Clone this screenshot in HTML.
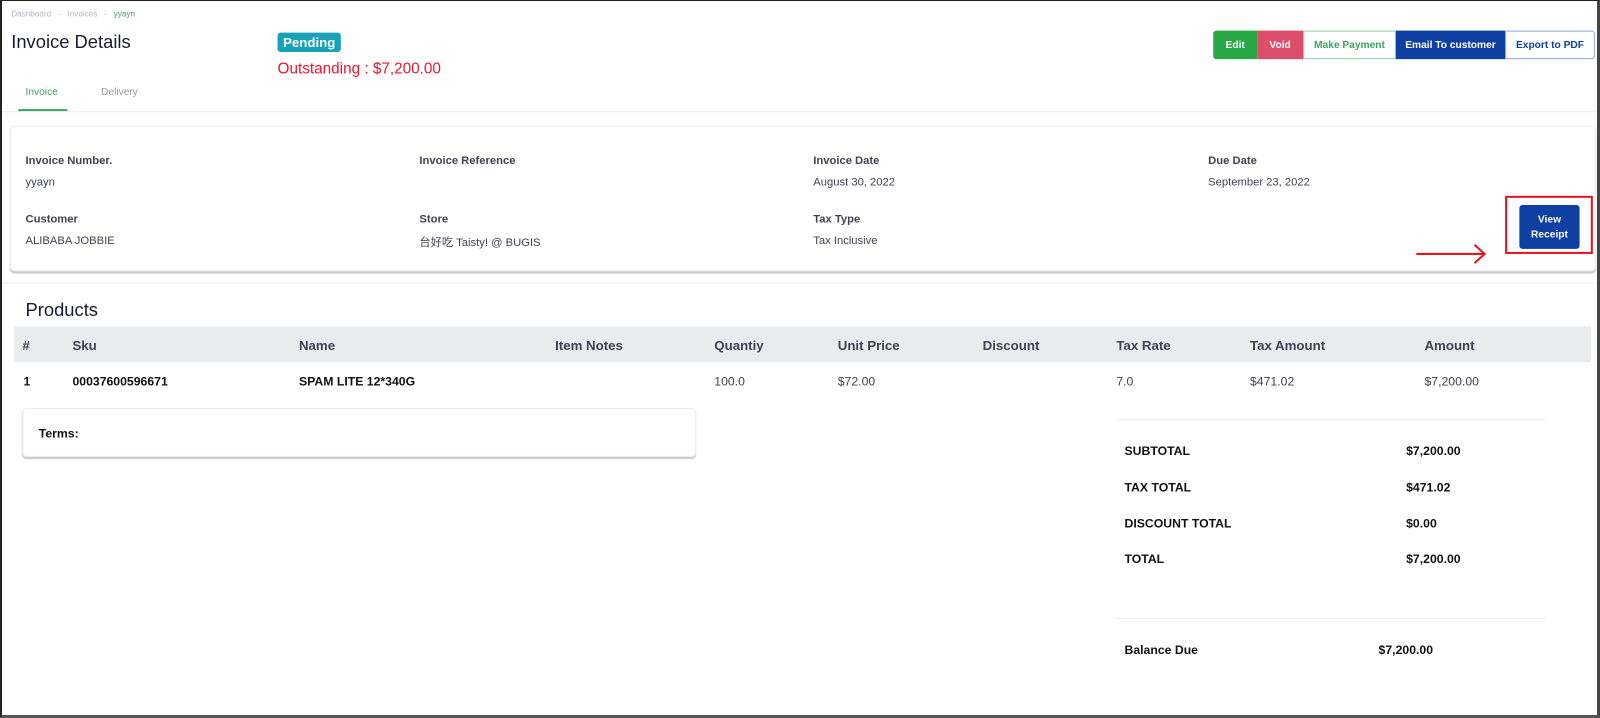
<!DOCTYPE html>
<html><head><meta charset="utf-8"><style>
*{margin:0;padding:0;box-sizing:border-box}
body{width:1600px;height:718px;background:#fff;font-family:"Liberation Sans","Noto Sans CJK SC",sans-serif;position:relative;overflow:hidden;color:#3f4254}
.wrap{position:absolute;left:0;top:0;width:1568px;height:704px;transform:scale(1.0204,1.0199);transform-origin:0 0}
.frame{position:absolute;left:0;top:0;width:1600px;height:718px;border-left:2px solid #222;border-top:1px solid #222;border-right:3px solid #444;border-bottom:3px solid #555}
.a{position:absolute;white-space:nowrap}
.lbl{font-size:11px;font-weight:bold;color:#3f4254}
.val{font-size:11px;color:#3f4254}
.th{font-size:13px;font-weight:bold;color:#3f4254}
.td{font-size:12px;color:#3f4254}
.btn{position:absolute;top:30px;height:28px;font-size:10px;font-weight:bold;display:flex;align-items:center;justify-content:center}
.tot{font-size:12px;font-weight:bold;color:#111}
</style></head><body>
<div class="wrap">
<div class="a" style="left:11px;top:9px;font-size:8px;color:#b5b5c3">Dashboard &nbsp;&nbsp;-&nbsp;&nbsp; Invoices &nbsp;&nbsp;-&nbsp;&nbsp; <span style="color:#3ba55c">yyayn</span></div>
<div class="a" style="left:11px;top:31px;font-size:18px;color:#181c32">Invoice Details</div>
<div class="a" style="left:272px;top:32px;width:62px;height:19px;background:#17a2b8;border-radius:3px;color:#fff;font-size:13px;font-weight:bold;text-align:center;line-height:19px">Pending</div>
<div class="a" style="left:272px;top:59px;font-size:15px;color:#f5132a">Outstanding : $7,200.00</div>
<div class="a" style="left:25px;top:85px;font-size:10px;color:#3ba55c">Invoice</div>
<div class="a" style="left:18px;top:107px;width:48px;height:2px;background:#3ba55c"></div>
<div class="a" style="left:99px;top:85px;font-size:10px;color:#999">Delivery</div>
<div class="a" style="left:2px;top:109px;width:1565px;height:1px;background:#ebedf3"></div>

<div class="btn" style="left:1189px;width:43px;background:#28a745;color:#fff;border-radius:3px 0 0 3px">Edit</div>
<div class="btn" style="left:1232px;width:45px;background:#dc4e6a;color:#fff">Void</div>
<div class="btn" style="left:1277px;width:91px;background:#fff;color:#3ba55c;border:1px solid #8fd19e">Make Payment</div>
<div class="btn" style="left:1368px;width:107px;background:#0e3fa3;color:#fff">Email To customer</div>
<div class="btn" style="left:1475px;width:88px;background:#fff;color:#0e3fa3;border:1px solid #8fa6d6;border-radius:0 3px 3px 0">Export to PDF</div>

<div class="a" style="left:10px;top:123px;width:1554px;height:143px;border:1px solid #ebedf3;border-radius:4px;box-shadow:0 2px 1px #c8c8c8"></div>
<div class="a lbl" style="left:25px;top:152px">Invoice Number.</div>
<div class="a val" style="left:25px;top:173px">yyayn</div>
<div class="a lbl" style="left:411px;top:152px">Invoice Reference</div>
<div class="a lbl" style="left:797px;top:152px">Invoice Date</div>
<div class="a val" style="left:797px;top:173px">August 30, 2022</div>
<div class="a lbl" style="left:1184px;top:152px">Due Date</div>
<div class="a val" style="left:1184px;top:173px">September 23, 2022</div>
<div class="a lbl" style="left:25px;top:209px">Customer</div>
<div class="a val" style="left:25px;top:230px">ALIBABA JOBBIE</div>
<div class="a lbl" style="left:411px;top:209px">Store</div>
<div class="a val" style="left:411px;top:229px">台好吃 Taisty! @ BUGIS</div>
<div class="a lbl" style="left:797px;top:209px">Tax Type</div>
<div class="a val" style="left:797px;top:230px">Tax Inclusive</div>
<svg class="a" style="left:1387px;top:236px" width="70" height="26"><line x1="1" y1="13" x2="68" y2="13" stroke="#e8141c" stroke-width="2"/><polyline points="58,4 68,13 58,22" fill="none" stroke="#e8141c" stroke-width="2"/></svg>
<div class="a" style="left:1475px;top:192px;width:86px;height:57px;border:2px solid #e8141c"></div>
<div class="a" style="left:1489px;top:201px;width:59px;height:43px;background:#0e3fa3;border-radius:3px;color:#fff;font-size:10px;font-weight:bold;text-align:center;line-height:15px;padding-top:7px;white-space:normal">View<br>Receipt</div>

<div class="a" style="left:2px;top:277px;width:1565px;height:1px;background:#ebedf3"></div>
<div class="a" style="left:25px;top:294px;font-size:18px;color:#181c32">Products</div>
<div class="a" style="left:14px;top:320px;width:1545px;height:35px;background:#e9ecef"></div>
<div class="a th" style="left:22px;top:331px">#</div>
<div class="a th" style="left:71px;top:331px">Sku</div>
<div class="a th" style="left:293px;top:331px">Name</div>
<div class="a th" style="left:544px;top:331px">Item Notes</div>
<div class="a th" style="left:700px;top:331px">Quantiy</div>
<div class="a th" style="left:821px;top:331px">Unit Price</div>
<div class="a th" style="left:963px;top:331px">Discount</div>
<div class="a th" style="left:1094px;top:331px">Tax Rate</div>
<div class="a th" style="left:1225px;top:331px">Tax Amount</div>
<div class="a th" style="left:1396px;top:331px">Amount</div>
<div class="a td" style="left:23px;top:367px;font-weight:bold;color:#111">1</div>
<div class="a td" style="left:71px;top:367px;font-weight:bold;color:#111">00037600596671</div>
<div class="a td" style="left:293px;top:367px;font-weight:bold;color:#111">SPAM LITE 12*340G</div>
<div class="a td" style="left:700px;top:367px">100.0</div>
<div class="a td" style="left:821px;top:367px">$72.00</div>
<div class="a td" style="left:1094px;top:367px">7.0</div>
<div class="a td" style="left:1225px;top:367px">$471.02</div>
<div class="a td" style="left:1396px;top:367px">$7,200.00</div>

<div class="a" style="left:22px;top:400px;width:660px;height:48px;border:1px solid #ebedf3;border-radius:4px;box-shadow:0 2px 1px #c8c8c8"></div>
<div class="a tot" style="left:38px;top:418px">Terms:</div>

<div class="a" style="left:1094px;top:411px;width:421px;height:1px;background:#ebedf3"></div>
<div class="a tot" style="left:1102px;top:435px">SUBTOTAL</div><div class="a tot" style="left:1378px;top:435px">$7,200.00</div>
<div class="a tot" style="left:1102px;top:471px">TAX TOTAL</div><div class="a tot" style="left:1378px;top:471px">$471.02</div>
<div class="a tot" style="left:1102px;top:506px">DISCOUNT TOTAL</div><div class="a tot" style="left:1378px;top:506px">$0.00</div>
<div class="a tot" style="left:1102px;top:541px">TOTAL</div><div class="a tot" style="left:1378px;top:541px">$7,200.00</div>
<div class="a" style="left:1094px;top:606px;width:421px;height:1px;background:#ebedf3"></div>
<div class="a tot" style="left:1102px;top:630px">Balance Due</div><div class="a tot" style="left:1351px;top:630px">$7,200.00</div>
</div>
<div class="frame"></div>
</body></html>
